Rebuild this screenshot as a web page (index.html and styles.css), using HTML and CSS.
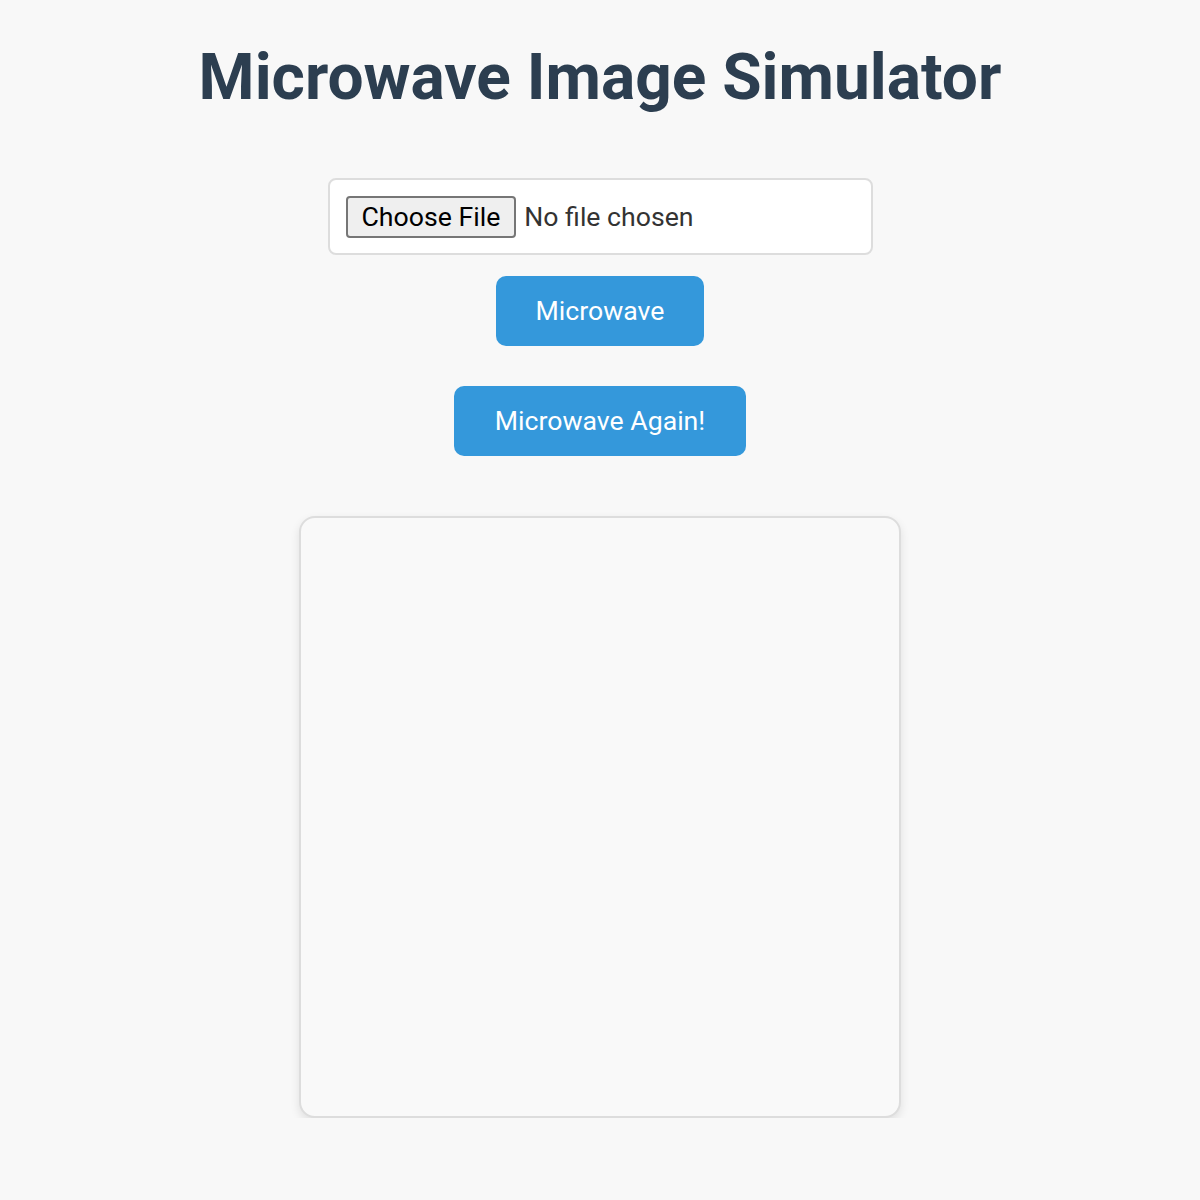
FILE: index.html
```html
<!DOCTYPE html>
<html lang="en">
<head>
  <meta charset="UTF-8">
  <meta name="viewport" content="width=device-width, initial-scale=1.0">
  <title>Microwave Image Simulator</title>
  <link rel="stylesheet" href="styles.css">
</head>
<body>
  <div class="container">
    <h1>Microwave Image Simulator</h1>
    <input type="file" id="upload" class="file-input" accept="image/*">
    <button class="btn" id="microwave">Microwave</button>
    <button class="btn again" id="again">Microwave Again!</button>
    <div class="canvas-box">
      <canvas id="canvas" width="600" height="600"></canvas>
    </div>
  </div>
</body>
</html>
```

FILE: styles.css
```css
body {
  font-family: Roboto, 'Liberation Sans', Arial, sans-serif;
  margin: 0;
  padding: 0;
  background-color: #f8f8f8;
  color: #333;
  text-align: center;
}
.container {
  display: flex;
  flex-direction: column;
  align-items: center;
}
h1 {
  margin: 40px 0 62px;
  font-size: 64px;
  font-weight: bold;
  line-height: 76px;
  color: #2c3e50;
}
.file-input {
  box-sizing: border-box;
  width: 545px;
  height: 77px;
  padding: 16px;
  background: white;
  border: 2px solid #ddd;
  border-radius: 8px;
  font-family: Roboto, 'Liberation Sans', Arial, sans-serif;
  font-size: 26.67px;
  color: #333;
  text-align: left;
}
.file-input::file-selector-button {
  font-family: Roboto, 'Liberation Sans', Arial, sans-serif;
  font-size: 26.67px;
  color: black;
  height: 42px;
  padding: 0 14px;
  margin-right: 8px;
  background: #efefef;
  border: 2px solid #767676;
  border-radius: 4px;
}
.btn {
  margin-top: 21px;
  padding: 0 40px;
  height: 70px;
  border: none;
  border-radius: 10px;
  background: #3498db;
  color: white;
  font-family: Roboto, 'Liberation Sans', Arial, sans-serif;
  font-size: 26.67px;
  cursor: pointer;
}
.btn.again {
  margin-top: 40px;
  padding: 0 41px;
}
.canvas-box {
  margin-top: 60px;
  width: 602px;
  height: 602px;
  box-sizing: border-box;
  border: 2px solid #ddd;
  border-radius: 16px;
  background: #f9f9f9;
  box-shadow: 0 4px 10px rgba(0, 0, 0, 0.1);
  overflow: hidden;
}
canvas {
  display: block;
  width: 100%;
  height: 100%;
}
```
